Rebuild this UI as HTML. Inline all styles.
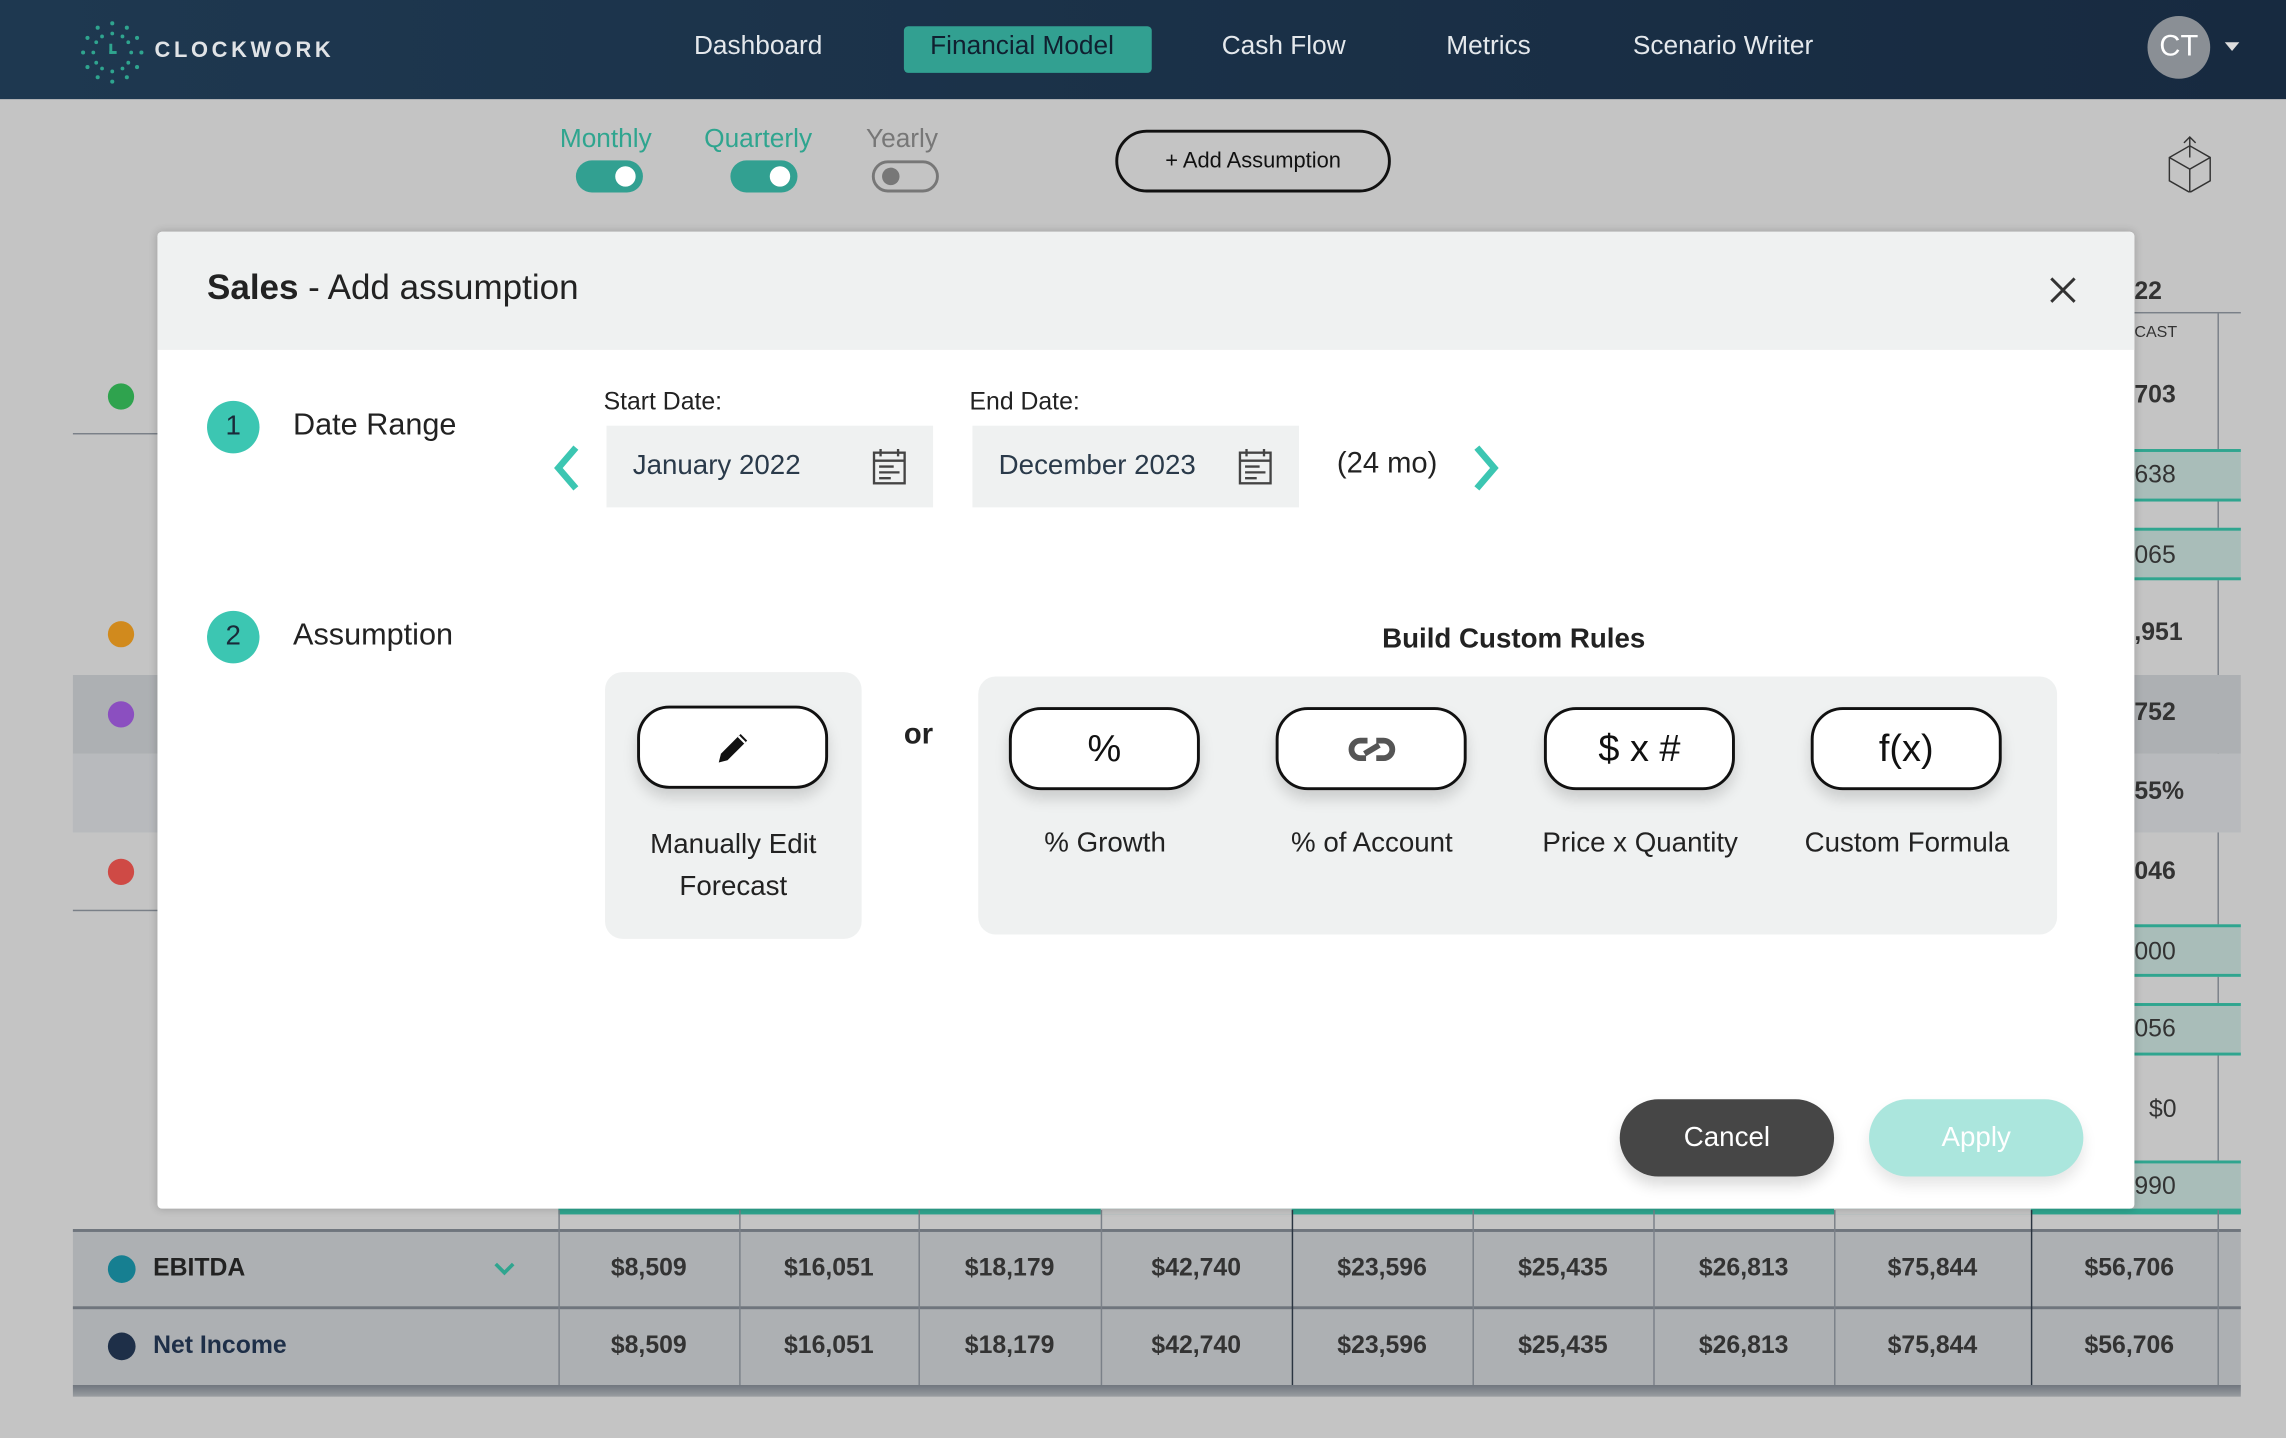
<!DOCTYPE html>
<html><head><meta charset="utf-8"><style>
*{box-sizing:border-box;margin:0;padding:0}
html,body{width:2286px;height:1438px;overflow:hidden;background:#c4c4c4}
body{font-family:"Liberation Sans",sans-serif;color:#222}
#s{position:absolute;left:0;top:0;width:1568px;height:986px;transform:scale(1.45791);transform-origin:0 0;background:#c4c4c4;overflow:hidden}
.a{position:absolute}
.hdr{left:0;top:0;width:1568px;height:68px;background:linear-gradient(90deg,#1e3850,#172a40)}
.nav{color:#e4e8ec;font-size:18px;top:21px}
.tog{width:46px;height:22px;border-radius:11px;background:#32a091}
.tog:after{content:"";position:absolute;right:5px;top:4px;width:14px;height:14px;border-radius:50%;background:#fff}
.togoff{background:#c4c4c4;border:2px solid #777}
.togoff:after{left:5px;right:auto;top:3px;background:#777;width:12px;height:12px}
.cell{font-size:17px;font-weight:bold;color:#333;text-align:center}
.vl{width:1px;background:#7a8088}
.btn{background:#fff;border:2px solid #111;border-radius:22px;width:131px;height:57px;box-shadow:0 6px 10px rgba(0,0,0,.15);display:flex;align-items:center;justify-content:center;font-size:26px;color:#111}
.lbl{font-size:19px;color:#222;text-align:center}
.num{width:36px;height:36px;border-radius:50%;background:#3cc6b2;color:#1a2a3a;font-size:19px;text-align:center;line-height:36px}
.date{background:#eff1f1;width:224px;height:56px;font-size:19px;color:#2a3a4a;padding:17px 0 0 18px}
</style></head><body><div id="s">
<div class="a hdr"></div>
<svg class="a" style="left:54px;top:13px" width="46" height="46" viewBox="0 0 46 46"><g fill="#2fa58f">
<circle cx="23" cy="3" r="1.4"/><circle cx="23" cy="43" r="1.4"/><circle cx="3" cy="23" r="1.4"/><circle cx="43" cy="23" r="1.4"/>
<circle cx="33" cy="6" r="1.4"/><circle cx="13" cy="6" r="1.4"/><circle cx="33" cy="40" r="1.4"/><circle cx="13" cy="40" r="1.4"/>
<circle cx="6" cy="13" r="1.4"/><circle cx="40" cy="13" r="1.4"/><circle cx="6" cy="33" r="1.4"/><circle cx="40" cy="33" r="1.4"/>
<circle cx="23" cy="10" r="1.3"/><circle cx="23" cy="36" r="1.3"/><circle cx="10" cy="23" r="1.3"/><circle cx="36" cy="23" r="1.3"/>
<circle cx="30" cy="12" r="1.3"/><circle cx="16" cy="12" r="1.3"/><circle cx="30" cy="34" r="1.3"/><circle cx="16" cy="34" r="1.3"/>
<circle cx="12" cy="16" r="1.3"/><circle cx="34" cy="16" r="1.3"/><circle cx="12" cy="30" r="1.3"/><circle cx="34" cy="30" r="1.3"/>
<rect x="21" y="17" width="2" height="7"/><rect x="21" y="22" width="5" height="2"/></g></svg>
<div class="a" style="left:106px;top:26px;color:#e0e3e6;font-size:15px;font-weight:bold;letter-spacing:2.5px">CLOCKWORK</div>
<div class="a nav" style="left:476px">Dashboard</div>
<div class="a" style="left:620px;top:18px;width:170px;height:32px;background:#32a091;border-radius:3px"></div>
<div class="a nav" style="left:638px;color:#102030">Financial Model</div>
<div class="a nav" style="left:838px">Cash Flow</div>
<div class="a nav" style="left:992px">Metrics</div>
<div class="a nav" style="left:1120px">Scenario Writer</div>
<div class="a" style="left:1473px;top:11px;width:43px;height:43px;border-radius:50%;background:#8a8f95;color:#fff;font-size:20px;text-align:center;line-height:43px">CT</div>
<div class="a" style="left:1526px;top:29px;border:5px solid transparent;border-top:6px solid #ddd"></div>

<div class="a" style="left:384px;top:85px;color:#2fa58f;font-size:18px">Monthly</div>
<div class="a" style="left:483px;top:85px;color:#2fa58f;font-size:18px">Quarterly</div>
<div class="a" style="left:594px;top:85px;color:#777;font-size:18px">Yearly</div>
<div class="a tog" style="left:395px;top:110px"></div>
<div class="a tog" style="left:501px;top:110px"></div>
<div class="a tog togoff" style="left:598px;top:110px"></div>
<div class="a" style="left:765px;top:89px;width:189px;height:43px;border:2px solid #111;border-radius:22px;font-size:15px;text-align:center;line-height:39px;color:#111">+ Add Assumption</div>
<svg class="a" style="left:1484px;top:92px" width="36" height="40" viewBox="0 0 36 40" fill="none" stroke="#333" stroke-width="1"><path d="M18 2v14M14 6l4-4 4 4M4 16l14-8 14 8v16l-14 8-14-8zM4 16l14 8 14-8M18 24v16"/></svg>

<!-- background table -->
<div class="a" style="left:1464px;top:190px;font-size:17px;font-weight:bold;color:#333">22</div>
<div class="a" style="left:1464px;top:214px;width:73px;height:1px;background:#7a8088"></div>
<div class="a" style="left:1464px;top:222px;font-size:11px;color:#333">CAST</div>
<div class="a" style="left:1521px;top:214px;width:1px;height:630px;background:#7a8088"></div>
<div class="a" style="left:1464px;top:308px;width:73px;height:36px;background:#a9bdb9;border-top:2px solid #2fa58f;border-bottom:2px solid #2fa58f"></div>
<div class="a" style="left:1464px;top:362px;width:73px;height:36px;background:#a9bdb9;border-top:2px solid #2fa58f;border-bottom:2px solid #2fa58f"></div>
<div class="a" style="left:1464px;top:634px;width:73px;height:36px;background:#a9bdb9;border-top:2px solid #2fa58f;border-bottom:2px solid #2fa58f"></div>
<div class="a" style="left:1464px;top:688px;width:73px;height:36px;background:#a9bdb9;border-top:2px solid #2fa58f;border-bottom:2px solid #2fa58f"></div>
<div class="a" style="left:1464px;top:796px;width:73px;height:36px;background:#a9bdb9;border-top:2px solid #2fa58f;border-bottom:2px solid #2fa58f"></div>
<div class="a" style="left:50px;top:463px;width:1487px;height:54px;background:#adb0b3"></div>
<div class="a" style="left:50px;top:517px;width:1487px;height:54px;background:#b8babd"></div>
<div class="a cell" style="left:1464px;top:261px">703</div>
<div class="a" style="left:1464px;top:316px;font-size:17px;color:#333">638</div>
<div class="a" style="left:1464px;top:371px;font-size:17px;color:#333">065</div>
<div class="a cell" style="left:1464px;top:424px">,951</div>
<div class="a cell" style="left:1464px;top:479px">752</div>
<div class="a cell" style="left:1464px;top:533px">55%</div>
<div class="a cell" style="left:1464px;top:588px">046</div>
<div class="a" style="left:1464px;top:643px;font-size:17px;color:#333">000</div>
<div class="a" style="left:1464px;top:696px;font-size:17px;color:#333">056</div>
<div class="a" style="left:1474px;top:751px;font-size:17px;color:#333">$0</div>
<div class="a" style="left:1464px;top:804px;font-size:17px;color:#333">990</div>
<div class="a" style="left:50px;top:297px;width:60px;height:1px;background:#7a8088"></div>
<div class="a" style="left:50px;top:624px;width:60px;height:1px;background:#7a8088"></div>
<div class="a" style="left:74px;top:263px;width:18px;height:18px;border-radius:50%;background:#2fa34e"></div>
<div class="a" style="left:74px;top:426px;width:18px;height:18px;border-radius:50%;background:#d18a1d"></div>
<div class="a" style="left:74px;top:481px;width:18px;height:18px;border-radius:50%;background:#8b4fc0"></div>
<div class="a" style="left:74px;top:589px;width:18px;height:18px;border-radius:50%;background:#cf4a45"></div>

<!-- bottom rows -->
<div class="a" style="left:383px;top:829px;width:1154px;height:4px;background:#2fa58f"></div>
<div class="a" style="left:755px;top:829px;width:131px;height:4px;background:#c4c4c4"></div>
<div class="a" style="left:1258px;top:829px;width:135px;height:4px;background:#c4c4c4"></div>
<div class="a" style="left:50px;top:843px;width:1487px;height:108px;background:#adb0b3;border-top:2px solid #6f757d"></div>
<div class="a" style="left:50px;top:896px;width:1487px;height:2px;background:#6f757d"></div>
<div class="a" style="left:50px;top:950px;width:1487px;height:8px;background:linear-gradient(#70767e,#9a9ea2)"></div>
<div class="a vl" style="left:383px;top:830px;height:120px"></div>
<div class="a vl" style="left:507px;top:830px;height:120px"></div>
<div class="a vl" style="left:630px;top:830px;height:120px"></div>
<div class="a vl" style="left:755px;top:830px;height:120px"></div>
<div class="a vl" style="left:886px;top:830px;height:120px;background:#2a3440"></div>
<div class="a vl" style="left:1010px;top:830px;height:120px"></div>
<div class="a vl" style="left:1134px;top:830px;height:120px"></div>
<div class="a vl" style="left:1258px;top:830px;height:120px"></div>
<div class="a vl" style="left:1393px;top:830px;height:120px;background:#2a3440"></div>
<div class="a vl" style="left:1521px;top:830px;height:120px"></div>
<div class="a" style="left:74px;top:861px;width:19px;height:19px;border-radius:50%;background:#167f91"></div>
<div class="a" style="left:74px;top:914px;width:19px;height:19px;border-radius:50%;background:#1e2f48"></div>
<div class="a" style="left:105px;top:860px;font-size:17px;font-weight:bold;color:#222">EBITDA</div>
<div class="a" style="left:105px;top:913px;font-size:17px;font-weight:bold;color:#1e2f48">Net Income</div>
<svg class="a" style="left:339px;top:865px" width="14" height="10"><path d="M1 2l6 6 6-6" stroke="#2fa58f" stroke-width="2.5" fill="none"/></svg>
<div class="a" style="left:383px;top:860px;width:1154px;display:flex" id="r1"></div>
<div class="a cell" style="left:383px;top:860px;width:124px">$8,509</div><div class="a cell" style="left:507px;top:860px;width:123px">$16,051</div><div class="a cell" style="left:630px;top:860px;width:125px">$18,179</div><div class="a cell" style="left:755px;top:860px;width:131px">$42,740</div><div class="a cell" style="left:886px;top:860px;width:124px">$23,596</div><div class="a cell" style="left:1010px;top:860px;width:124px">$25,435</div><div class="a cell" style="left:1134px;top:860px;width:124px">$26,813</div><div class="a cell" style="left:1258px;top:860px;width:135px">$75,844</div><div class="a cell" style="left:1393px;top:860px;width:135px">$56,706</div>
<div class="a cell" style="left:383px;top:913px;width:124px">$8,509</div><div class="a cell" style="left:507px;top:913px;width:123px">$16,051</div><div class="a cell" style="left:630px;top:913px;width:125px">$18,179</div><div class="a cell" style="left:755px;top:913px;width:131px">$42,740</div><div class="a cell" style="left:886px;top:913px;width:124px">$23,596</div><div class="a cell" style="left:1010px;top:913px;width:124px">$25,435</div><div class="a cell" style="left:1134px;top:913px;width:124px">$26,813</div><div class="a cell" style="left:1258px;top:913px;width:135px">$75,844</div><div class="a cell" style="left:1393px;top:913px;width:135px">$56,706</div>

<!-- modal -->
<div class="a" style="left:108px;top:159px;width:1356px;height:670px;background:#fff;border-radius:3px;box-shadow:0 0 6px rgba(0,0,0,.2)"></div>
<div class="a" style="left:108px;top:159px;width:1356px;height:81px;background:#eff1f1;border-radius:3px 3px 0 0"></div>
<div class="a" style="left:142px;top:184px;font-size:24px;color:#222"><b>Sales</b> - Add assumption</div>
<svg class="a" style="left:1405px;top:189px" width="20" height="20"><path d="M2 2l16 16M18 2L2 18" stroke="#333" stroke-width="2"/></svg>

<div class="a num" style="left:142px;top:275px">1</div>
<div class="a" style="left:201px;top:280px;font-size:21px">Date Range</div>
<div class="a num" style="left:142px;top:419px">2</div>
<div class="a" style="left:201px;top:424px;font-size:21px">Assumption</div>
<div class="a" style="left:414px;top:266px;font-size:17px">Start Date:</div>
<div class="a" style="left:665px;top:266px;font-size:17px">End Date:</div>
<svg class="a" style="left:378px;top:304px" width="22" height="34"><path d="M17 3L5 17l12 14" stroke="#3cc6b2" stroke-width="4.5" fill="none"/></svg>
<div class="a date" style="left:416px;top:292px">January 2022</div>
<div class="a date" style="left:667px;top:292px">December 2023</div>
<svg class="a" style="left:598px;top:307px" width="24" height="26" viewBox="0 0 24 26" fill="none" stroke="#444" stroke-width="1.6"><rect x="1.5" y="3.5" width="21" height="21"/><path d="M1.5 9h21M6 1v5M18 1v5M5 13h10M5 17h14M5 21h8"/></svg>
<svg class="a" style="left:849px;top:307px" width="24" height="26" viewBox="0 0 24 26" fill="none" stroke="#444" stroke-width="1.6"><rect x="1.5" y="3.5" width="21" height="21"/><path d="M1.5 9h21M6 1v5M18 1v5M5 13h10M5 17h14M5 21h8"/></svg>
<div class="a" style="left:917px;top:307px;font-size:20px">(24 mo)</div>
<svg class="a" style="left:1008px;top:304px" width="22" height="34"><path d="M5 3l12 14L5 31" stroke="#3cc6b2" stroke-width="4.5" fill="none"/></svg>

<div class="a" style="left:948px;top:428px;font-size:19px;font-weight:bold">Build Custom Rules</div>
<div class="a" style="left:415px;top:461px;width:176px;height:183px;background:#eff1f1;border-radius:12px"></div>
<div class="a" style="left:671px;top:464px;width:740px;height:177px;background:#eff1f1;border-radius:12px"></div>
<div class="a" style="left:620px;top:493px;font-size:20px;font-weight:bold">or</div>
<div class="a btn" style="left:437px;top:484px"><svg width="28" height="28" viewBox="0 0 28 28"><path d="M4 24l1.5-6L19 4.5l4.5 4.5L10 22.5z" fill="#111"/><path d="M17.5 6l4.5 4.5" stroke="#fff" stroke-width="1.5"/></svg></div>
<div class="a lbl" style="left:415px;top:565px;width:176px;line-height:29px">Manually Edit<br>Forecast</div>
<div class="a btn" style="left:692px;top:485px">%</div>
<div class="a btn" style="left:875px;top:485px"><svg width="34" height="20" viewBox="0 0 34 20" fill="none" stroke="#555" stroke-width="4"><path d="M14 4H9a6 6 0 000 12h4M20 4h5a6 6 0 010 12h-5M12 13l10-6"/></svg></div>
<div class="a btn" style="left:1059px;top:485px">$ x #</div>
<div class="a btn" style="left:1242px;top:485px">f(x)</div>
<div class="a lbl" style="left:678px;top:568px;width:160px">% Growth</div>
<div class="a lbl" style="left:861px;top:568px;width:160px">% of Account</div>
<div class="a lbl" style="left:1045px;top:568px;width:160px">Price x Quantity</div>
<div class="a lbl" style="left:1228px;top:568px;width:160px">Custom Formula</div>

<div class="a" style="left:1111px;top:754px;width:147px;height:53px;border-radius:27px;background:#464646;color:#fff;font-size:19px;text-align:center;line-height:53px;box-shadow:0 6px 10px rgba(0,0,0,.15)">Cancel</div>
<div class="a" style="left:1282px;top:754px;width:147px;height:53px;border-radius:27px;background:#abe6dd;color:#fff;font-size:19px;text-align:center;line-height:53px;box-shadow:0 6px 10px rgba(0,0,0,.1)">Apply</div>
</div></body></html>
